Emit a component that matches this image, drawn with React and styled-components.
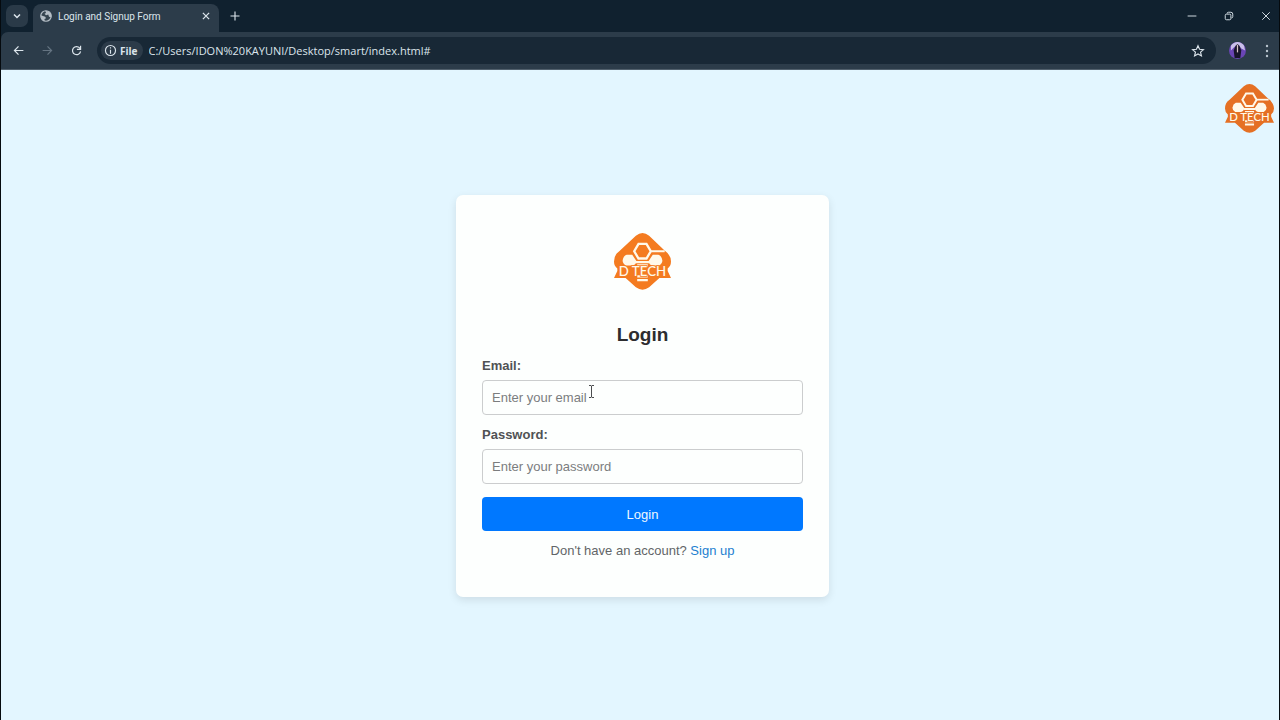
import React, { useState } from 'react';
import styled, { createGlobalStyle } from 'styled-components';

const GlobalStyle = createGlobalStyle`
  * {
    box-sizing: border-box;
  }

  body {
    margin: 0;
    font-family: "Liberation Sans", Arial, sans-serif;
    font-size: 13px;
  }

  button, input {
    font: inherit;
  }
`;

const Window = styled.div`
  display: flex;
  flex-direction: column;
  min-height: 100vh;
  border: 0 solid #050a0e;
  border-width: 0 1px;
  background: #e3f6ff;
`;

const Browser = styled.header`
  font-family: "Open Sans", "Noto Sans", sans-serif;
  color: #dce5ec;
  background: #10212f;
  border-bottom: 1px solid #51606d;
`;

const TabStrip = styled.div`
  display: flex;
  align-items: center;
  height: 32px;
  padding-left: 5px;
`;

const IconButton = styled.button`
  display: flex;
  align-items: center;
  justify-content: center;
  flex: none;
  width: 22px;
  height: 22px;
  padding: 0;
  border: none;
  border-radius: 7px;
  color: ${({ $dim }) => ($dim ? '#657482' : '#dce5ec')};
  background: ${({ $bg }) => $bg || 'transparent'};
`;

const Tab = styled.div`
  display: flex;
  align-items: center;
  align-self: flex-end;
  width: 186px;
  height: 28px;
  margin: 0 5px;
  padding: 0 2px 4px 7px;
  border-radius: 8px 8px 0 0;
  background: #2c3c4a;
`;

const TabTitle = styled.span`
  flex: 1;
  margin-left: 6px;
  font-family: Roboto, sans-serif;
  font-size: 10px;
  white-space: nowrap;
`;

const WindowButtons = styled.div`
  display: flex;
  gap: 15px;
  margin-left: auto;
  padding-right: 2px;
`;

const Toolbar = styled.div`
  display: flex;
  align-items: center;
  gap: 7px;
  height: 37px;
  padding: 0 1px 0 6px;
  border-radius: 7px 0 0 0;
  background: #2c3c4a;
`;

const AddressBar = styled.div`
  display: flex;
  align-items: center;
  flex: 1;
  height: 27px;
  margin-left: 3px;
  padding: 0 7px 0 4px;
  border-radius: 14px;
  background: #182836;
`;

const FileChip = styled.span`
  display: flex;
  align-items: center;
  gap: 3px;
  height: 19px;
  padding: 0 5px 0 3px;
  border-radius: 10px;
  font-size: 10px;
  font-weight: 700;
  background: #2c3b49;
`;

const AddressInput = styled.input`
  flex: 1;
  min-width: 0;
  margin-left: 6px;
  padding: 0;
  border: none;
  outline: none;
  font-size: 11px;
  color: #dce5ec;
  background: transparent;
`;

const Avatar = styled.svg`
  width: 17px;
  height: 17px;
  margin: 0 3px 0 6px;
  flex: none;
`;

const Page = styled.main`
  position: relative;
  display: flex;
  flex: 1;
  align-items: center;
  justify-content: center;
  padding: 2px 0 0 5px;
`;

const LogoSvg = styled.svg`
  display: block;
  width: ${({ $size }) => $size};
  height: ${({ $size }) => $size};
`;

const CornerLogo = styled.div`
  position: absolute;
  top: 14px;
  right: 5px;
`;

const Card = styled.form`
  display: flex;
  flex-direction: column;
  width: 373px;
  max-width: 100%;
  padding: 38px 26px;
  border-radius: 7px;
  background: #fdfffe;
  box-shadow: 0 3px 8px rgba(0, 0, 0, 0.1);
`;

const CardLogo = styled.div`
  align-self: center;
  margin-bottom: 34px;
`;

const Title = styled.h2`
  margin: 0;
  font-size: 19px;
  line-height: 22px;
  text-align: center;
  color: #2d2d2f;
`;

const Field = styled.div`
  position: relative;
  margin-top: 12px;
`;

const Label = styled.label`
  display: block;
  margin-bottom: 6px;
  font-weight: bold;
  line-height: 16px;
  color: #505254;
`;

const Input = styled.input`
  display: block;
  width: 100%;
  height: 35px;
  padding: 0 9px;
  border: 1px solid #cbcdce;
  border-radius: 4px;
  outline: none;
  background: #fdfffe;

  &::placeholder {
    color: #7b7d7e;
  }
`;

const SubmitButton = styled.button`
  height: 34px;
  margin-top: 13px;
  border: none;
  border-radius: 4px;
  color: #eef8ff;
  background: #0078ff;
  cursor: pointer;
`;

const Hint = styled.p`
  margin: 12px 0 0;
  line-height: 16px;
  text-align: center;
  color: #626567;
`;

const SignUpLink = styled.a`
  color: #1c80d0;
  text-decoration: none;
`;

const TextCursor = styled.svg`
  position: absolute;
  left: 105px;
  top: 26px;
  width: 9px;
  height: 15px;
`;

const Icon = ({ size = 16, width = 1.5, children }) => (
  <svg width={size} height={size} viewBox="0 0 16 16" fill="none" stroke="currentColor" strokeWidth={width}>
    {children}
  </svg>
);

function Logo({ size, color = '#f47b20' }) {
  return (
    <LogoSvg $size={size} viewBox="0 0 172 172" role="img" aria-label="D TECH">
      <path
        fill={color}
        d="M66 8Q86 -8 106 8L151 51Q172 66 172 86Q172 99 162 107L162 115L172 136H137L106 164Q86 179 66 164L35 136H0L10 115L10 107Q0 99 0 86Q0 66 15 56Z"
      />
      <g fill="none" stroke="#fff9ea">
        <path d="M74 33H98L111 55L98 77H74L61 55Z" strokeWidth="7" />
        <path d="M112 55H153" strokeWidth="6" />
        <path d="M66 88H106M70 98H102M70 131H102M70 142H102" strokeWidth="7" />
      </g>
      <path
        fill="#fff9ea"
        d="M38 66H55L68 85Q65 98 54 98H36Q26 92 26 83Q28 70 38 66ZM117 66H134Q144 70 146 83Q146 92 136 98H118Q107 98 104 85Z"
      />
      <text
        x="86"
        y="131"
        textAnchor="middle"
        fontFamily="Lato, sans-serif"
        fontSize="40"
        fontWeight="500"
        fill="#fff9ea"
        stroke={color}
        strokeWidth="5"
        paintOrder="stroke"
      >
        D TECH
      </text>
    </LogoSvg>
  );
}

function BrowserBar() {
  const [address, setAddress] = useState('C:/Users/IDON%20KAYUNI/Desktop/smart/index.html#');

  return (
    <Browser>
      <TabStrip>
        <IconButton $bg="#2a3a48" aria-label="Search tabs">
          <Icon size={12} width={2}><path d="M4 6l4 4 4-4" /></Icon>
        </IconButton>
        <Tab>
          <svg width="12" height="12" viewBox="0 0 16 16">
            <circle cx="8" cy="8" r="7" fill="#35444f" stroke="#b5bec6" strokeWidth="1.6" />
            <path fill="#b5bec6" d="M1 7l3 1 3 1 1 2-2 1v3L2 12ZM7 1l5 1 3 4v4l-3-1-1-3-3 1-2-2 2-1Z" />
          </svg>
          <TabTitle>Login and Signup Form</TabTitle>
          <IconButton aria-label="Close tab">
            <Icon size={10} width={2}><path d="M3 3l10 10M13 3L3 13" /></Icon>
          </IconButton>
        </Tab>
        <IconButton aria-label="New tab">
          <Icon size={12} width={1.5}><path d="M8 2v12M2 8h12" /></Icon>
        </IconButton>
        <WindowButtons>
          <IconButton aria-label="Minimize">
            <Icon size={10}><path d="M1 8h14" /></Icon>
          </IconButton>
          <IconButton aria-label="Restore">
            <Icon size={10}>
              <rect x="2" y="5" width="9" height="9" rx="2" />
              <path d="M5 4q0-2 2-2h4q3 0 3 3v4q0 2-2 2" />
            </Icon>
          </IconButton>
          <IconButton aria-label="Close">
            <Icon size={10}><path d="M2 2l12 12M14 2L2 14" /></Icon>
          </IconButton>
        </WindowButtons>
      </TabStrip>
      <Toolbar>
        <IconButton aria-label="Back">
          <Icon size={13}><path d="M14 8H3M8 3L3 8l5 5" /></Icon>
        </IconButton>
        <IconButton $dim aria-label="Forward">
          <Icon size={13}><path d="M2 8h11M8 3l5 5-5 5" /></Icon>
        </IconButton>
        <IconButton aria-label="Reload">
          <Icon size={13}><path d="M13 9a5 5 0 1 1-1-4l1 1M13 2v4.500H8.500" /></Icon>
        </IconButton>
        <AddressBar>
          <FileChip>
            <Icon size={13} width={1.4}>
              <circle cx="8" cy="8" r="6.200" />
              <path d="M8 7v5M8 4v1.500" />
            </Icon>
            File
          </FileChip>
          <AddressInput aria-label="Address" value={address} onChange={(e) => setAddress(e.target.value)} />
          <IconButton aria-label="Bookmark this page">
            <Icon size={14} width={1.3}>
              <path d="M8 2l1.800 4 4.400.4-3.300 2.900 1 4.300L8 11.300l-3.900 2.300 1-4.300L1.800 6.400 6.200 6Z" />
            </Icon>
          </IconButton>
        </AddressBar>
        <Avatar viewBox="0 0 18 18">
          <circle cx="9" cy="9" r="9" fill="#6a45b5" />
          <path fill="#c9bfe9" d="M2 4Q5 0 9 0t7 4l1 5-4-2-3-4-4 2-4 4Z" />
          <path fill="#18152b" d="M7 4l2-2 2 2 2 5-1 8H6L5 9Z" />
          <path stroke="#d7c2c3" strokeWidth="1.300" d="M9 3v8" />
        </Avatar>
        <IconButton aria-label="Menu">
          <svg width="14" height="14" viewBox="0 0 14 14" fill="#b9c4cd">
            <circle cx="7" cy="2" r="1.200" />
            <circle cx="7" cy="7" r="1.200" />
            <circle cx="7" cy="12" r="1.200" />
          </svg>
        </IconButton>
      </Toolbar>
    </Browser>
  );
}

function App() {
  return (
    <>
      <GlobalStyle />
      <Window>
        <BrowserBar />
        <Page>
          <CornerLogo>
            <Logo size="49px" color="#e57024" />
          </CornerLogo>
          <Card onSubmit={(e) => e.preventDefault()}>
            <CardLogo>
              <Logo size="57px" />
            </CardLogo>
            <Title>Login</Title>
            <Field>
              <Label htmlFor="email">Email:</Label>
              <Input id="email" type="email" placeholder="Enter your email" />
              <TextCursor viewBox="0 0 9 15" fill="none" stroke="#4b4d4f">
                <path d="M2 1.500h2l.5.500.5-.500h2M4.500 2v11M2 13.500h2l.5-.500.5.500h2" />
              </TextCursor>
            </Field>
            <Field>
              <Label htmlFor="password">Password:</Label>
              <Input id="password" type="password" placeholder="Enter your password" />
            </Field>
            <SubmitButton type="submit">Login</SubmitButton>
            <Hint>
              Don't have an account? <SignUpLink href="#">Sign up</SignUpLink>
            </Hint>
          </Card>
        </Page>
      </Window>
    </>
  );
}

export default App;
